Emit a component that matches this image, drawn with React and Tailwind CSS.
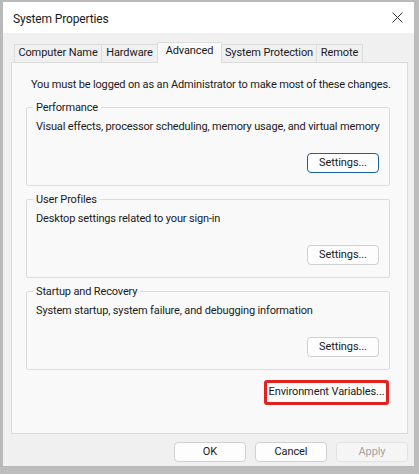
import React from 'react'

const font = { fontFamily: 'Roboto, "Liberation Sans", Arial, sans-serif' }

const Button = ({ children, focused, disabled, className = '' }) => (
    <div
        className={`h-[20px] w-[72px] flex items-center justify-center rounded-[4px] text-[11px] tracking-[-0.1px] whitespace-nowrap border ${
            focused ? 'border-[#1b5fa3] bg-[#fdfdfd] text-[#1a1a1a]' : disabled ? 'border-[#e2e2e2] bg-[#f5f5f5] text-[#a3a3a3]' : 'border-[#d0d0d0] bg-[#fdfdfd] text-[#1a1a1a]'
        } ${className}`}
    >
        {children}
    </div>
)

const Group = ({ title, text, focused }) => (
    <div className='relative border border-[#dcdcdc] rounded-[2px] h-[79px] pl-[9px] pr-[10px] pt-[11px] pb-[12px] flex flex-col'>
        <span className='absolute -top-[8px] left-[6px] px-[3px] bg-[#f9f9f9] text-[11px] tracking-[-0.15px] leading-[15px] text-[#1a1a1a] whitespace-nowrap'>{title}</span>
        <p className='text-[11px] tracking-[-0.15px] leading-[15px] text-[#1a1a1a] whitespace-nowrap'>{text}</p>
        <div className='mt-auto flex justify-end'>
            <Button focused={focused}>Settings...</Button>
        </div>
    </div>
)

const tabs = [
    { label: 'Computer Name', w: 'w-[88px]' },
    { label: 'Hardware', w: 'w-[57px]' },
    { label: 'Advanced', w: 'w-[65px]', active: true },
    { label: 'System Protection', w: 'w-[96px]' },
    { label: 'Remote', w: 'w-[47px]' },
]

const App = () => {
    return (
        <div className='w-[419px] h-[474px] bg-[#bdbdbd] overflow-hidden' style={font}>
            <div className='w-[415px] h-[467px] border-t-[2px] border-l-[3px] border-r border-b border-[#b9b9b9] bg-[#f0f0f0] flex flex-col'>
                <div className='h-[31px] bg-white flex items-center justify-between pl-[10px] pr-[10px]'>
                    <span className='text-[12px] tracking-[-0.15px] text-[#1a1a1a] pt-[2px]'>System Properties</span>
                    <svg width='11' height='11' viewBox='0 0 11 11' className='mr-[1px]'>
                        <path d='M0.5 0.5 L10.5 10.5 M10.5 0.5 L0.5 10.5' stroke='#333' strokeWidth='1' />
                    </svg>
                </div>
                <div className='pt-[8px] pl-[8px] pr-[6px]'>
                    <div className='flex items-end pl-[3px] h-[21px]'>
                        {tabs.map((t) => (
                            <div
                                key={t.label}
                                className={`${t.w} flex items-center justify-center whitespace-nowrap text-[11px] tracking-[-0.1px] text-[#1a1a1a] border-t border-l border-r border-[#dcdcdc] -mr-px ${
                                    t.active ? 'h-[21px] bg-[#f9f9f9] relative z-10 pb-[3px] -mb-px' : 'h-[18px] bg-[#f0f0f0]'
                                }`}
                            >
                                {t.label}
                            </div>
                        ))}
                    </div>
                    <div className='h-[372px] bg-[#f9f9f9] border border-[#dcdcdc] pl-[14px] pr-[17px] pt-[14px]'>
                        <p className='text-[11px] tracking-[-0.15px] leading-[15px] text-[#1a1a1a] pl-[5px] whitespace-nowrap'>
                            You must be logged on as an Administrator to make most of these changes.
                        </p>
                        <div className='mt-[15px] flex flex-col gap-[13px]'>
                            <Group title='Performance' text='Visual effects, processor scheduling, memory usage, and virtual memory' focused />
                            <Group title='User Profiles' text='Desktop settings related to your sign-in' />
                            <Group title='Startup and Recovery' text='System startup, system failure, and debugging information' />
                        </div>
                        <div className='flex justify-end mt-[10px] mr-[1px]'>
                            <div className='border-[3px] border-[#e3211f] rounded-[3px] p-px'>
                                <div className='h-[17px] w-[117px] flex items-center justify-center whitespace-nowrap text-[11px] tracking-[-0.1px] text-[#1a1a1a] bg-[#fdfdfd]'>
                                    Environment Variables...
                                </div>
                            </div>
                        </div>
                    </div>
                    <div className='flex justify-end gap-[9px] mt-[8px]'>
                        <Button>OK</Button>
                        <Button>Cancel</Button>
                        <Button disabled>Apply</Button>
                    </div>
                </div>
            </div>
        </div>
    )
}

export default App
